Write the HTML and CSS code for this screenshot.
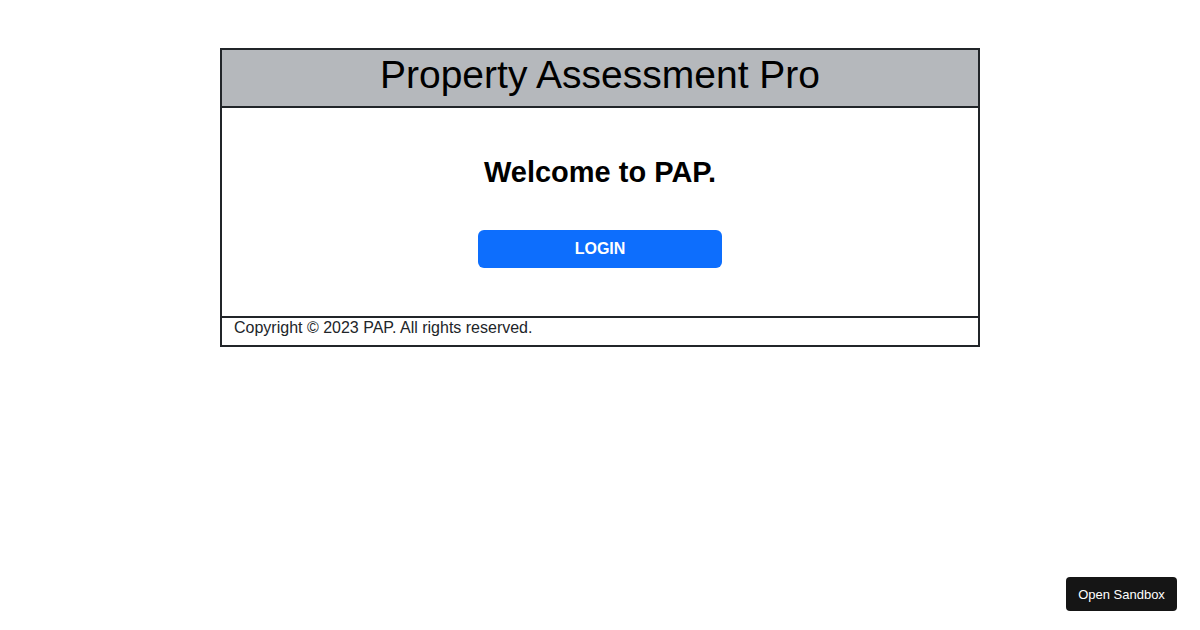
FILE: index.html
```html
<!DOCTYPE html>
<html>
<head>
<meta charset="utf-8">
<link rel="stylesheet" href="styles.css">
</head>
<body>
<div class="app">
  <header class="app-header">
    <h1 class="app-title">Property Assessment Pro</h1>
  </header>
  <main class="app-main">
    <h2 class="welcome">Welcome to PAP.</h2>
    <button class="login-btn">LOGIN</button>
  </main>
  <footer class="app-footer">Copyright © 2023 PAP. All rights reserved.</footer>
</div>
<a class="sandbox-btn">Open Sandbox</a>
</body>
</html>
```
FILE: styles.css
```css
* { box-sizing: border-box; }
html, body { margin: 0; padding: 0; background: #fff; }
body {
  font-family: "Liberation Sans", Arial, sans-serif;
  color: #212529;
}
.app {
  width: 760px;
  margin: 48px auto 0;
  border: 2px solid #212529;
  display: flex;
  flex-direction: column;
}
.app-header {
  background: #b5b8bc;
  border-bottom: 2px solid #212529;
  height: 58px;
  display: flex;
  align-items: center;
  justify-content: center;
}
.app-title {
  margin: 0;
  font-size: 39px;
  font-weight: 400;
  color: #000;
  line-height: 1;
  position: relative;
  top: -4px;
}
.app-main {
  height: 208px;
  display: flex;
  flex-direction: column;
  align-items: center;
  padding-top: 47px;
}
.welcome {
  margin: 0;
  font-size: 29px;
  font-weight: 700;
  color: #000;
  line-height: 35px;
}
.login-btn {
  margin-top: 40px;
  width: 244px;
  height: 38px;
  border: none;
  border-radius: 6px;
  background: #0d6efd;
  color: #fff;
  font-family: "Liberation Sans", Arial, sans-serif;
  font-size: 16px;
  font-weight: 700;
  padding: 0;
}
.app-footer {
  border-top: 2px solid #212529;
  padding: 1px 12px 0;
  height: 29px;
  font-size: 16px;
  line-height: 18px;
  color: #212529;
}
.sandbox-btn {
  position: fixed;
  right: 23px;
  bottom: 19px;
  width: 111px;
  height: 34px;
  background: #151515;
  color: #fff;
  border-radius: 4px;
  font-family: "Liberation Sans", Arial, sans-serif;
  font-size: 13px;
  display: flex;
  align-items: center;
  justify-content: center;
}
```
